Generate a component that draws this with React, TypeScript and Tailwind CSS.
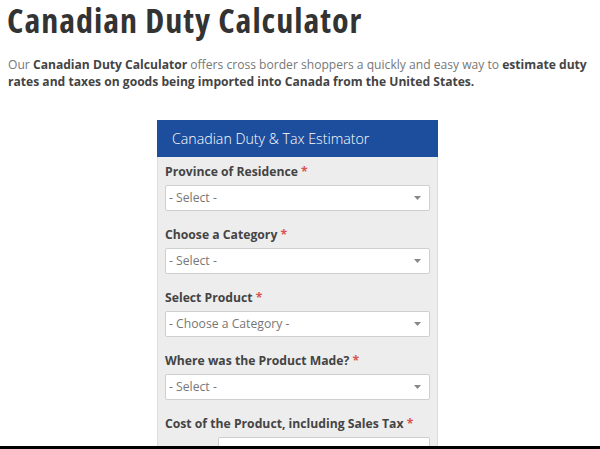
import React from "react";

const Caret = () => (
  <svg width="7" height="4" viewBox="0 0 7 4" className="absolute right-[8px] top-1/2 -translate-y-1/2">
    <path d="M0 0 L7 0 L3.5 4 Z" fill="#888" />
  </svg>
);

const Label = ({ children }: { children: React.ReactNode }) => (
  <div className="text-[12.2px] leading-[18px] font-bold text-[#444] mb-[4px] whitespace-nowrap">
    {children} <span className="text-[#d9534f]">*</span>
  </div>
);

const Select = ({ text }: { text: string }) => (
  <div className="relative h-[26px] bg-white border border-[#cfcfcf] rounded-[2px] flex items-center pl-[3px] text-[12.2px] text-[#777]">
    {text}
    <Caret />
  </div>
);

export default function App() {
  return (
    <div
      className="w-[600px] h-[449px] bg-white flex flex-col overflow-hidden"
      style={{ fontFamily: '"Open Sans", "Noto Sans", sans-serif' }}
    >
      <div className="flex-1 overflow-hidden">
        <h1 className="pl-[7px] pt-[0px] text-[34px] leading-[40px] font-bold text-[#333] [font-stretch:75%] tracking-[1px]">
          Canadian Duty Calculator
        </h1>
        <p className="pl-[8px] pr-[4px] mt-[16px] text-[12.1px] leading-[17px] text-[#777]">
          Our <b className="text-[#444]">Canadian Duty Calculator</b> offers cross border shoppers a quickly and easy way to{" "}
          <b className="text-[#444]">estimate duty rates and taxes on goods being imported into Canada from the United States.</b>
        </p>
        <div className="ml-[157px] mt-[30px] w-[281px]">
          <div className="h-[37px] bg-[#1c4e9d] text-white text-[14.2px] font-light pl-[15px] flex items-center">
            Canadian Duty &amp; Tax Estimator
          </div>
          <div className="bg-[#ededed] border-x border-[#dcdcdc] px-[7px] pt-[6px] pb-[20px] flex flex-col gap-[15px]">
            <div>
              <Label>Province of Residence</Label>
              <Select text="- Select -" />
            </div>
            <div>
              <Label>Choose a Category</Label>
              <Select text="- Select -" />
            </div>
            <div>
              <Label>Select Product</Label>
              <Select text="- Choose a Category -" />
            </div>
            <div>
              <Label>Where was the Product Made?</Label>
              <Select text="- Select -" />
            </div>
            <div>
              <Label>Cost of the Product, including Sales Tax</Label>
              <div className="ml-[53px] h-[26px] bg-white border border-[#cfcfcf] rounded-[2px]" />
            </div>
          </div>
        </div>
      </div>
      <div className="h-[3px] bg-black shrink-0" />
    </div>
  );
}
